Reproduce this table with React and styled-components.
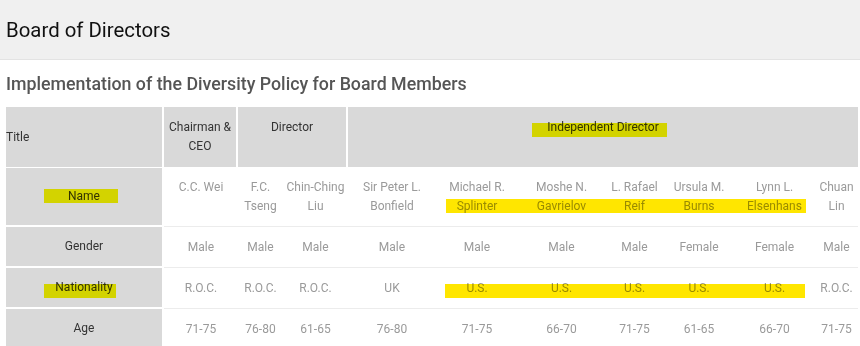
import React from "react";
import styled, { createGlobalStyle } from "styled-components";

const GlobalStyle = createGlobalStyle`
  body {
    margin: 0;
    background: #ffffff;
    font-family: Roboto, "Liberation Sans", sans-serif;
    overflow: hidden;
  }
`;

const columns = [158, 74, 45, 65, 88, 82, 87, 59, 70, 81, 43];

const names = [
  ["C.C. Wei"],
  ["F.C.", "Tseng"],
  ["Chin-Ching", "Liu"],
  ["Sir Peter L.", "Bonfield"],
  ["Michael R.", "Splinter"],
  ["Moshe N.", "Gavrielov"],
  ["L. Rafael", "Reif"],
  ["Ursula M.", "Burns"],
  ["Lynn L.", "Elsenhans"],
  ["Chuan", "Lin"],
];

const rows = [
  { label: "Gender", values: ["Male", "Male", "Male", "Male", "Male", "Male", "Male", "Female", "Female", "Male"] },
  { label: "Nationality", values: ["R.O.C.", "R.O.C.", "R.O.C.", "UK", "U.S.", "U.S.", "U.S.", "U.S.", "U.S.", "R.O.C."] },
  { label: "Age", values: ["71-75", "76-80", "61-65", "76-80", "71-75", "66-70", "71-75", "61-65", "66-70", "71-75"] },
];

// marker strokes drawn over the screenshot
const marks = [
  { x: 532, y: 123, w: 135, h: 14, tone: "grey" },
  { x: 44, y: 189, w: 74, h: 14, tone: "grey" },
  { x: 446, y: 199, w: 360, h: 14, tone: "white" },
  { x: 44, y: 284, w: 72, h: 14, tone: "grey" },
  { x: 445, y: 284, w: 360, h: 14, tone: "white" },
];

const Diversity = () => {
  return (
    <>
      <GlobalStyle />
      <Page>
        <TopBar>
          <h1>Board of Directors</h1>
        </TopBar>
        <Section>
          <h2>Implementation of the Diversity Policy for Board Members</h2>
          <Table>
            <colgroup>
              {columns.map((w, i) => (
                <col key={i} width={w} />
              ))}
            </colgroup>
            <thead>
              <tr>
                <Head $align="left" $valign="middle">Title</Head>
                <Head>Chairman &amp;<br />CEO</Head>
                <Head colSpan={2}>Director</Head>
                <Head colSpan={7} $last>Independent Director</Head>
              </tr>
            </thead>
            <tbody>
              <tr>
                <Label>Name</Label>
                {names.map((n, i) => (
                  <Cell key={i} $valign="top">
                    {n[0]}
                    {n[1] && <br />}
                    {n[1]}
                  </Cell>
                ))}
              </tr>
              {rows.map((r) => (
                <tr key={r.label}>
                  <Label>{r.label}</Label>
                  {r.values.map((v, i) => (
                    <Cell key={i}>{v}</Cell>
                  ))}
                </tr>
              ))}
            </tbody>
          </Table>
        </Section>
        {marks.map((m, i) => (
          <Mark key={i} $x={m.x} $y={m.y} $w={m.w} $h={m.h} $tone={m.tone} />
        ))}
      </Page>
    </>
  );
};

const Page = styled.div`
  position: relative;
  width: 860px;
  min-height: 346px;
`;

const TopBar = styled.header`
  height: 59px;
  background: #f0f0f0;
  border-bottom: 1px solid #e3e3e3;
  display: flex;
  align-items: center;
  padding-left: 6px;

  h1 {
    margin: 0;
    font-size: 20.4px;
    font-weight: 400;
    color: #111;
  }
`;

const Section = styled.section`
  padding: 12px 0 0 6px;

  h2 {
    margin: 0 0 11px;
    font-size: 17.8px;
    line-height: 24px;
    font-weight: 500;
    color: #555;
  }
`;

const Table = styled.table`
  width: 852px;
  table-layout: fixed;
  border-collapse: separate;
  border-spacing: 0;
  font-size: 12px;
  line-height: 19px;
`;

const Head = styled.th`
  background: #d9d9d9;
  color: #333;
  font-weight: 400;
  height: 58px;
  box-sizing: border-box;
  padding: 11px 2px;
  text-align: ${(p) => p.$align || "center"};
  vertical-align: ${(p) => p.$valign || "top"};
  border-right: ${(p) => (p.$last ? "0" : "2px solid #fff")};
  border-bottom: 1px solid #fff;

  &:first-child {
    padding-left: 0;
  }
`;

const Label = styled.td`
  background: #d9d9d9;
  color: #333;
  text-align: center;
  vertical-align: middle;
  padding: 10px 2px;
  border-right: 2px solid #fff;
  border-bottom: 2px solid #fff;
`;

const Cell = styled.td`
  color: #9a9a9a;
  text-align: center;
  vertical-align: ${(p) => p.$valign || "middle"};
  padding: 10px 0;
  border-bottom: 1px solid #ececec;
  white-space: nowrap;
`;

const Mark = styled.span`
  position: absolute;
  left: ${(p) => p.$x}px;
  top: ${(p) => p.$y}px;
  width: ${(p) => p.$w}px;
  height: ${(p) => p.$h}px;
  background: ${(p) => (p.$tone === "grey" ? "#f8f800" : "#ffe600")};
  mix-blend-mode: multiply;
  pointer-events: none;
`;

export default Diversity;
